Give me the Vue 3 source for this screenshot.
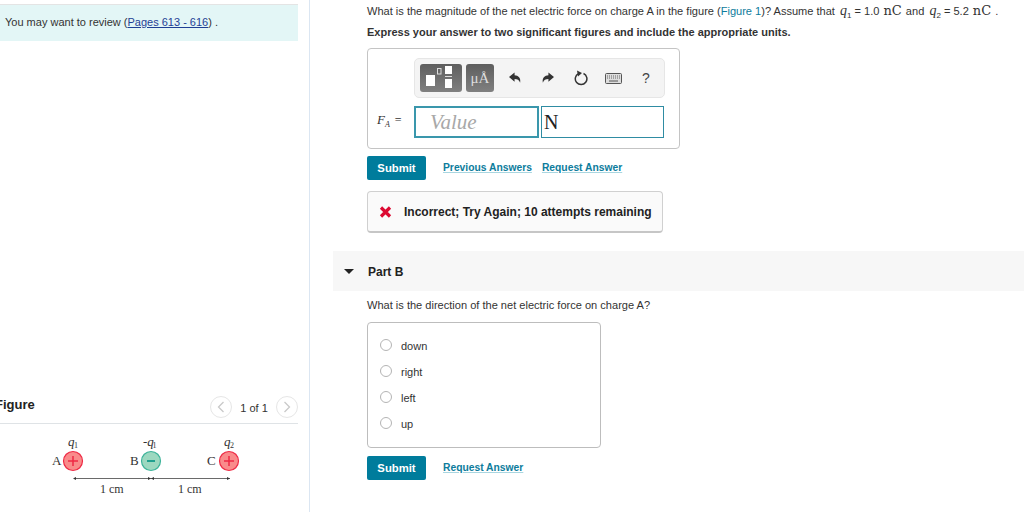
<template>
  <div class="page">
    <aside class="left">
      <div class="review">You may want to review (<a class="pages">Pages 613 - 616</a>) .</div>
      <div class="fig-head">
        <h2>Figure</h2>
        <div class="pager">
          <span class="circle"><svg width="8" height="12" viewBox="0 0 8 12"><path d="M6.500 1 1.500 6l5 5" /></svg></span>
          <span class="count">1 of 1</span>
          <span class="circle"><svg width="8" height="12" viewBox="0 0 8 12"><path d="M1.500 1l5 5-5 5" /></svg></span>
        </div>
      </div>
      <svg class="diagram" width="298" height="88" viewBox="0 0 298 88">
        <g class="serif">
          <text x="68" y="22" font-style="italic" font-size="13">q</text><text x="74" y="24" font-size="8">1</text>
          <text x="143" y="22" font-style="italic" font-size="13">-q</text><text x="152.500" y="24" font-size="8">1</text>
          <text x="224" y="22" font-style="italic" font-size="13">q</text><text x="230" y="24" font-size="8">2</text>
          <text x="52" y="41" font-size="13">A</text>
          <text x="130" y="41" font-size="13">B</text>
          <text x="207" y="41" font-size="13">C</text>
          <text x="100" y="69" font-size="12">1 cm</text>
          <text x="178" y="69" font-size="12">1 cm</text>
        </g>
        <circle cx="73" cy="37" r="9.500" fill="#f98b8b" stroke="#ee2a45" stroke-width="1.200" />
        <path d="M68 37h10M73 32v10" stroke="#ee2a45" stroke-width="1.500" />
        <circle cx="151" cy="37" r="9.500" fill="#9cd8c0" stroke="#3db39a" stroke-width="1.200" />
        <path d="M147 37h8" stroke="#129a8a" stroke-width="1.800" />
        <circle cx="229" cy="37" r="9.500" fill="#f98b8b" stroke="#ee2a45" stroke-width="1.200" />
        <path d="M224 37h10M229 32v10" stroke="#ee2a45" stroke-width="1.500" />
        <path d="M74 54.500h156" stroke="#444" stroke-width="0.800" />
        <path d="M73 54.500l3-1.500v3zM151 54.500l-3-1.500v3zM151 54.500l3-1.500v3zM230 54.500l-3-1.500v3z" fill="#333" />
      </svg>
    </aside>

    <main class="right">
      <section class="content">
        <p class="q">
          What is the magnitude of the net electric force on charge A in the figure (<a class="fig">Figure 1</a>)? Assume that
          <i class="m">q</i><sub>1</sub> = 1.0 <span class="unit">nC</span> and <i class="m">q</i><sub>2</sub> = 5.2 <span class="unit">nC</span> .
        </p>
        <p class="express">Express your answer to two significant figures and include the appropriate units.</p>

        <div class="answer">
          <div class="toolbar">
            <div class="tool wide">
              <svg width="32" height="24" viewBox="0 0 32 24">
                <rect x="1" y="9" width="9" height="11" fill="#fff" />
                <rect x="12.500" y="2.500" width="3.500" height="5.500" fill="none" stroke="#ddd" />
                <rect x="20" y="0" width="7" height="8" fill="#fff" />
                <rect x="20" y="10" width="7" height="1" fill="#ddd" />
                <rect x="20" y="13" width="7" height="9" fill="#fff" />
              </svg>
            </div>
            <div class="tool mu">μÅ</div>
            <svg class="ico undo" width="13" height="12" viewBox="0 0 14 12"><path d="M6 0 0 5l6 5V7c3 0 5 1 6 4 1-5-2-8-6-8z" fill="#333" /></svg>
            <svg class="ico redo" width="13" height="12" viewBox="0 0 14 12"><path d="M8 0l6 5-6 5V7c-3 0-5 1-6 4-1-5 2-8 6-8z" fill="#333" /></svg>
            <svg class="ico reset" width="14" height="16" viewBox="0 0 14 16"><path d="M9.500 3.500a5.800 5.800 0 1 1-5 .1" fill="none" stroke="#333" stroke-width="1.500" /><path d="M3 0.500 8 3 4 6.500z" fill="#333" /></svg>
            <svg class="ico keys" width="17" height="11" viewBox="0 0 17 11"><rect x=".5" y=".5" width="16" height="10" rx="1" fill="#ddd" stroke="#555" /><path d="M2 3h13M2 5h13" stroke="#666" stroke-dasharray="1 1" /><path d="M4 8h9" stroke="#555" /></svg>
            <span class="help">?</span>
          </div>
          <div class="inputs">
            <span class="label"><i>F</i><sub>A</sub> =</span>
            <span class="value">Value</span>
            <span class="units">N</span>
          </div>
        </div>

        <div class="actions first">
          <button class="submit">Submit</button>
          <a class="link">Previous Answers</a>
          <a class="link">Request Answer</a>
        </div>

        <div class="feedback">
          <svg width="13" height="12" viewBox="0 0 13 12"><path d="M2 1.500l9 9M11 1.500l-9 9" stroke="#dc0a32" stroke-width="3.200" /></svg>
          <span>Incorrect; Try Again; 10 attempts remaining</span>
        </div>
      </section>

      <div class="partb">
        <span class="tri"></span>
        <span class="partb-title">Part B</span>
      </div>

      <section class="content">
        <p class="q second">What is the direction of the net electric force on charge A?</p>
        <div class="options">
          <label v-for="o in options" :key="o" class="opt"><span class="radio"></span><span>{{ o }}</span></label>
        </div>
        <div class="actions">
          <button class="submit">Submit</button>
          <a class="link">Request Answer</a>
        </div>
      </section>
    </main>
  </div>
</template>

<script setup>
const options = ['down', 'right', 'left', 'up']
</script>

<style>
html, body { margin: 0; background: #fff; }
</style>

<style scoped>
.page {
  width: 1024px;
  height: 512px;
  overflow: hidden;
  display: flex;
  font-family: "Liberation Sans", Arial, sans-serif;
  color: #333;
  font-size: 11px;
}
.left {
  width: 310px;
  height: 512px;
  box-sizing: border-box;
  border-right: 1px solid #dbe6f2;
  flex: none;
}
.review {
  margin-top: 4px;
  width: 298px;
  height: 37px;
  box-sizing: border-box;
  border-top: 1px solid #e4e4e4;
  background: #e3f6f6;
  padding: 11px 0 0 5px;
  line-height: 13px;
}
.pages { color: #1f3f95; text-decoration: underline; }
.fig-head {
  width: 298px;
  margin-top: 351px;
  padding-top: 4px;
  height: 27px;
  border-bottom: 1px solid #dfe3e6;
  display: flex;
  justify-content: space-between;
  align-items: flex-start;
}
h2 {
  margin: 1px 0 0 -5px;
  font-size: 13px;
  font-weight: 700;
  line-height: 16px;
  color: #222;
}
.pager { display: flex; align-items: center; }
.circle {
  width: 22px;
  height: 22px;
  border: 1px solid #e6e6e6;
  border-radius: 50%;
  display: flex;
  align-items: center;
  justify-content: center;
  box-sizing: border-box;
}
.circle path { fill: none; stroke: #c9c9c9; stroke-width: 1.300; }
.count { width: 44px; text-align: center; color: #333; margin-top: 2px; }
.diagram { display: block; }
.serif text { font-family: "Liberation Serif", serif; fill: #333; }

.right { width: 714px; flex: none; }
.content { padding-left: 57px; }
.q { margin: 0; padding-top: 4px; line-height: 13px; white-space: nowrap; font-size: 11.050px; }
.fig { color: #0d7c9c; }
.m { font-family: "Liberation Serif", serif; font-size: 14px; margin-left: 2px; }
sub { font-size: 8px; line-height: 0; }
.unit { font-family: "DejaVu Serif", serif; font-size: 13px; margin: 0 1px; }
.express { margin: 8px 0 0; font-weight: 700; line-height: 13px; }
.answer {
  margin-top: 9px;
  width: 313px;
  height: 101px;
  box-sizing: border-box;
  border: 1px solid #c4c4c4;
  border-radius: 4px;
  padding: 9px 14px 0 46px;
}
.toolbar {
  width: 251px;
  height: 40px;
  box-sizing: border-box;
  background: #f4f4f4;
  border: 1px solid #e6e6e6;
  border-radius: 5px;
  display: flex;
  align-items: center;
  padding-left: 5px;
}
.tool {
  height: 28px;
  border-radius: 3px;
  background: linear-gradient(#5e5e5e, #808080);
  display: flex;
  align-items: center;
  justify-content: center;
}
.wide { width: 42px; }
.mu {
  width: 28px;
  margin-left: 4px;
  color: #ddd;
  font-family: "Liberation Serif", serif;
  font-size: 15px;
}
.ico { flex: none; }
.undo { margin-left: 15px; }
.redo { margin-left: 19px; }
.reset { margin-left: 20px; }
.keys { margin-left: 17px; }
.help { margin-left: 20px; font-size: 14px; color: #444; }
.inputs { display: flex; margin-top: 8px; height: 32px; margin-left: -37px; }
.label {
  width: 37px;
  font-family: "Liberation Serif", serif;
  font-size: 12px;
  line-height: 27px;
  color: #333;
  white-space: nowrap;
}
.label i { font-size: 13px; }
.label sub { font-style: italic; margin-right: 2px; }
.value {
  width: 125px;
  box-sizing: border-box;
  border: 2px solid #3a97ac;
  margin-right: 2px;
  padding-left: 14px;
  font-family: "Liberation Serif", serif;
  font-style: italic;
  font-size: 21px;
  line-height: 28px;
  color: #a8a8a8;
}
.units {
  width: 123px;
  box-sizing: border-box;
  border: 1px solid #2f8ca3;
  padding-left: 2px;
  font-family: "Liberation Serif", serif;
  font-size: 20px;
  line-height: 30px;
  color: #222;
}
.actions { display: flex; align-items: flex-start; margin-top: 8px; }
.actions.first { margin-top: 7px; }
.submit {
  width: 59px;
  height: 24px;
  margin: 0 17px 0 0;
  padding: 0;
  border: none;
  border-radius: 2px;
  background: #007c9c;
  color: #fff;
  font-family: "Liberation Sans", Arial, sans-serif;
  font-size: 11.300px;
  font-weight: 700;
}
.link {
  margin-top: 5px;
  margin-right: 10px;
  color: #0d7c9c;
  font-size: 10.300px;
  font-weight: 700;
  line-height: 13px;
  text-decoration: underline;
  text-decoration-color: #a9d6e0;
}
.feedback {
  margin-top: 11px;
  width: 296px;
  height: 42px;
  box-sizing: border-box;
  border: 1px solid #d0d0d0;
  border-bottom: 2px solid #c6c6c6;
  border-radius: 4px;
  background: #fafafa;
  display: flex;
  align-items: center;
  gap: 12px;
  padding: 1px 0 0 11px;
  font-weight: 700;
  font-size: 12px;
  color: #222;
}
.partb {
  margin-top: 18px;
  margin-left: 23px;
  height: 40px;
  background: #f7f7f7;
  display: flex;
  align-items: center;
  font-weight: 700;
  font-size: 12px;
  color: #222;
  padding-left: 11px;
}
.partb-title { margin-top: 1px; }
.tri {
  width: 0;
  height: 0;
  border-left: 5px solid transparent;
  border-right: 5px solid transparent;
  border-top: 5px solid #222;
  margin-right: 14px;
}
.second { padding-top: 8px; }
.options {
  margin-top: 10px;
  width: 234px;
  height: 126px;
  box-sizing: border-box;
  border: 1px solid #bdbdbd;
  border-radius: 4px;
  padding-top: 9px;
  display: flex;
  flex-direction: column;
}
.opt { display: flex; align-items: center; height: 26px; padding-left: 12px; }
.opt span:last-child { margin-top: 2px; margin-left: 9px; }
.radio {
  width: 12px;
  height: 12px;
  box-sizing: border-box;
  border: 1px solid #b4b4b4;
  border-radius: 50%;
  background: #fff;
}
</style>
